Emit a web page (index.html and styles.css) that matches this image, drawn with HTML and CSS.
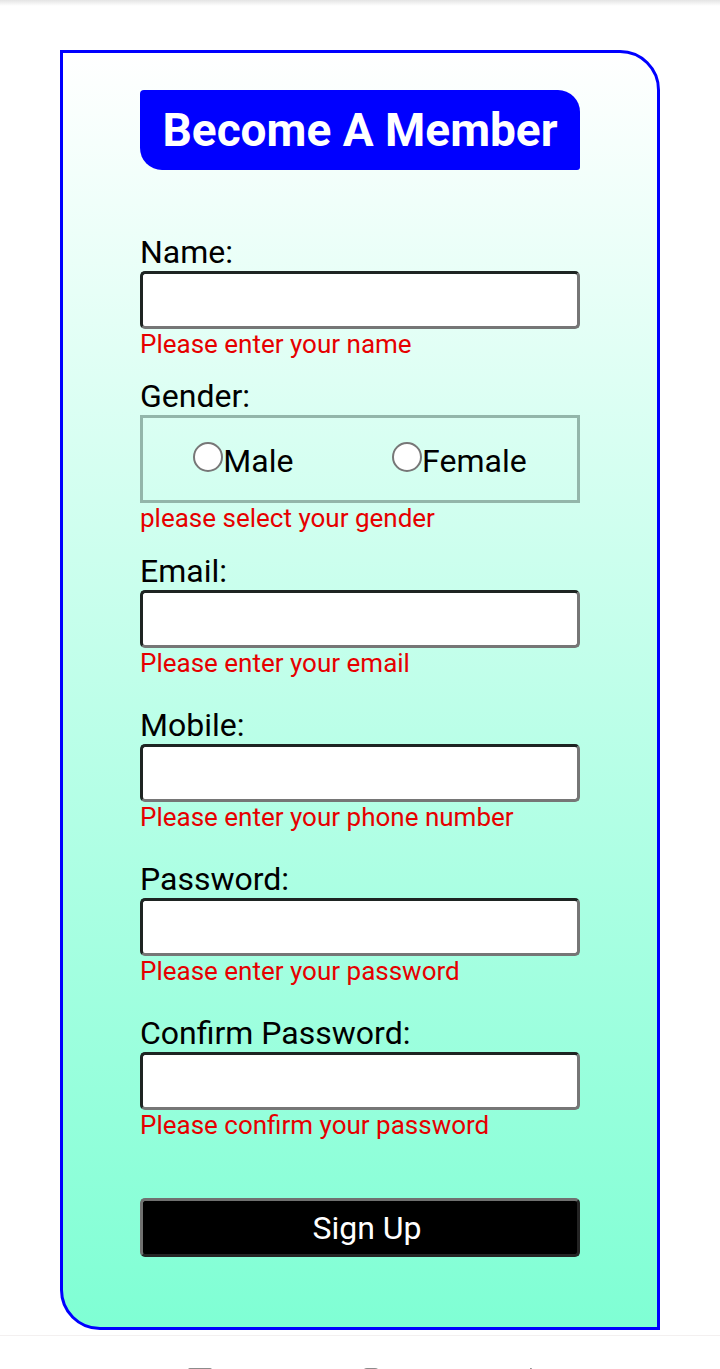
FILE: index.html
```html
<!DOCTYPE html>
<html lang="en">
<head>
    <meta charset="UTF-8">
    <meta name="viewport" content="width=device-width, initial-scale=1.0">
    <title>Become A Member</title>
    <link rel="stylesheet" href="styles.css">
</head>
<body>

    <div class="top-shade"></div>

    <main class="page">
        <form class="card" id="signupForm">
            <h1 class="title">Become A Member</h1>

            <!-- Name -->
            <div class="field field-name">
                <label for="name">Name:</label>
                <input type="text" id="name">
                <span class="error">Please enter your name</span>
            </div>

            <!-- Gender -->
            <div class="field field-gender">
                <label>Gender:</label>
                <div class="gender-box">
                    <label class="option"><input type="radio" name="gender" value="male">Male</label>
                    <label class="option"><input type="radio" name="gender" value="female">Female</label>
                </div>
                <span class="error">please select your gender</span>
            </div>

            <!-- Email -->
            <div class="field">
                <label for="email">Email:</label>
                <input type="email" id="email">
                <span class="error">Please enter your email</span>
            </div>

            <!-- Mobile -->
            <div class="field">
                <label for="mobile">Mobile:</label>
                <input type="tel" id="mobile">
                <span class="error">Please enter your phone number</span>
            </div>

            <!-- Password -->
            <div class="field">
                <label for="password">Password:</label>
                <input type="password" id="password">
                <span class="error">Please enter your password</span>
            </div>

            <!-- Confirm Password -->
            <div class="field field-last">
                <label for="confirm">Confirm Password:</label>
                <input type="password" id="confirm">
                <span class="error">Please confirm your password</span>
            </div>

            <button type="button" class="submit">Sign Up</button>
        </form>
    </main>

    <div class="navbar">
        <span class="nav-icon nav-recent"></span>
        <span class="nav-icon nav-home"></span>
        <span class="nav-icon nav-back"></span>
    </div>

</body>
</html>
```

FILE: styles.css
```css
body {
    font-family: Roboto, "Noto Sans", sans-serif;
    background-color: #fff;
    margin: 0;
    height: 1369px;
    overflow: hidden;
}

.top-shade {
    height: 6px;
    background: linear-gradient(#e4e4e4, #fff);
}

.page {
    padding-top: 44px;
}

.card {
    width: 600px;
    margin-left: 60px;
    box-sizing: border-box;
    border: 3px solid #0000ff;
    border-radius: 0 40px 0 40px;
    background: linear-gradient(#fff, #7fffd4);
    padding: 37px 0 70px 77px;
}

.title {
    width: 440px;
    height: 80px;
    margin: 0 0 63px 0;
    background-color: #0000ff;
    color: #fff;
    font-size: 46px;
    font-weight: 700;
    line-height: 80px;
    text-align: center;
    border-radius: 4px 22px 3px 22px;
}

.field {
    display: flex;
    flex-direction: column;
    width: 440px;
    margin-bottom: 28px;
}

.field-name {
    margin-bottom: 18px;
}

.field-gender {
    margin-bottom: 19px;
}

.field-last {
    margin-bottom: 58px;
}

label {
    font-size: 32px;
    color: #000;
}

.field input[type="text"],
.field input[type="email"],
.field input[type="tel"],
.field input[type="password"] {
    height: 58px;
    width: 100%;
    box-sizing: border-box;
    margin: 0;
    background-color: #fff;
    border: 3px solid;
    border-color: #1e2422 #767676 #767676 #1e2422;
    border-radius: 5px;
    font-size: 28px;
}

.error {
    font-size: 26px;
    color: #e60000;
}

.gender-box {
    height: 88px;
    box-sizing: border-box;
    border: 3px solid #93b6aa;
    display: flex;
    align-items: center;
    justify-content: space-around;
    padding: 4px 1px 0 1px;
}

.option {
    display: flex;
    align-items: center;
}

.option input[type="radio"] {
    appearance: none;
    width: 30px;
    height: 30px;
    margin: 0 0 8px 0;
    border: 2px solid #777;
    border-radius: 50%;
    background-color: #fff;
    box-sizing: border-box;
}

.submit {
    width: 440px;
    height: 59px;
    background-color: #000;
    color: #fff;
    font-family: Roboto, sans-serif;
    font-size: 32px;
    border: 3px solid;
    border-color: #707170 #242424 #242424 #707170;
    border-radius: 5px;
    cursor: pointer;
    padding: 0 0 0 14px;
}

.navbar {
    margin-top: 5px;
    height: 34px;
    border-top: 1px solid #f3f0f0;
    display: flex;
    justify-content: center;
    gap: 150px;
    padding-top: 32px;
    box-sizing: border-box;
}

.nav-icon {
    display: block;
    height: 20px;
    border: 2px solid #8c8c8c;
    border-radius: 2px;
}

.nav-recent {
    width: 20px;
}

.nav-home {
    width: 14px;
    border-radius: 5px;
}

.nav-back {
    width: 0;
    border-width: 2px 0 0 2px;
}
```
